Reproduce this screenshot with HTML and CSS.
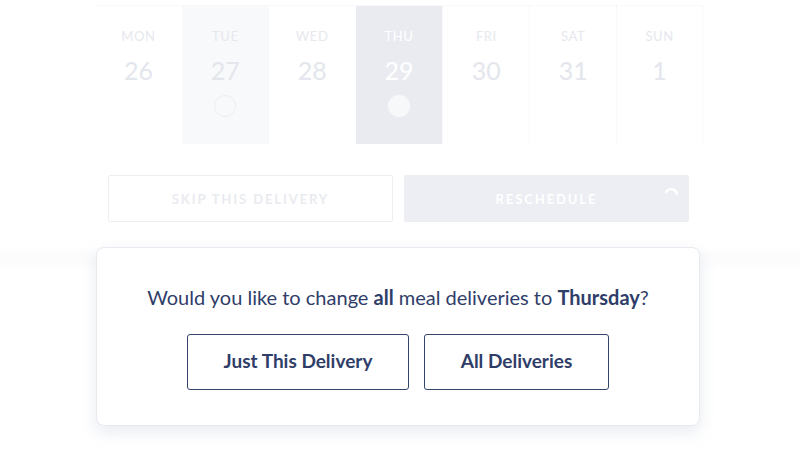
FILE: index.html
```html
<!DOCTYPE html>
<html>
<head>
<meta charset="utf-8">
<link rel="stylesheet" href="styles.css">
</head>
<body>
<div class="page">
  <div class="week">
    <div class="day"><span class="dname">MON</span><span class="dnum">26</span></div>
    <div class="day day-tue"><span class="dname">TUE</span><span class="dnum">27</span><span class="dot dot-outline"></span></div>
    <div class="day"><span class="dname">WED</span><span class="dnum">28</span></div>
    <div class="day day-thu"><span class="dname">THU</span><span class="dnum">29</span><span class="dot dot-fill"></span></div>
    <div class="day day-line"><span class="dname">FRI</span><span class="dnum">30</span></div>
    <div class="day day-line"><span class="dname">SAT</span><span class="dnum">31</span></div>
    <div class="day day-line day-last"><span class="dname">SUN</span><span class="dnum">1</span></div>
  </div>

  <div class="actions">
    <div class="btn-skip">SKIP THIS DELIVERY</div>
    <div class="btn-resched">RESCHEDULE
      <svg class="spinner" width="18" height="18" viewBox="0 0 18 18"><path d="M4 7 A6 6 0 0 1 15 9" fill="none" stroke="#ffffff" stroke-width="2.4" stroke-linecap="round"/></svg>
    </div>
  </div>

  <div class="backdrop">
    <div class="modal">
      <p class="question">Would you like to change <b>all</b> meal deliveries to <b>Thursday</b>?</p>
      <div class="choices">
        <div class="choice choice-just">Just This Delivery</div>
        <div class="choice choice-all">All Deliveries</div>
      </div>
    </div>
  </div>
</div>
</body>
</html>
```
FILE: styles.css
```css
html, body {
  margin: 0;
  padding: 0;
  background: #ffffff;
}
body {
  width: 800px;
  height: 459px;
  overflow: hidden;
  font-family: "Lato", "Open Sans", sans-serif;
}
.page {
  padding-top: 5px;
}
.week {
  margin-left: 95px;
  width: 608px;
  display: grid;
  grid-template-columns: repeat(7, 1fr);
  border-top: 1px dotted #f1f2f5;
  height: 138px;
}
.day {
  display: flex;
  flex-direction: column;
  align-items: center;
  padding-top: 22px;
}
.day-tue {
  background: #f8f9fa;
}
.day-thu {
  background: #e9ebf1;
}
.day-line {
  border-left: 1px dotted #f3f4f7;
}
.day-last {
  border-right: 1px dotted #f3f4f7;
}
.dname {
  font-size: 13px;
  letter-spacing: 0.6px;
  color: #e6e8ee;
  line-height: 16px;
}
.dnum {
  font-size: 25px;
  color: #e4e6ed;
  line-height: 30px;
  margin-top: 11px;
}
.day-thu .dname, .day-thu .dnum {
  color: #ffffff;
}
.dot {
  width: 22px;
  height: 22px;
  border-radius: 50%;
  margin-top: 10px;
  box-sizing: border-box;
}
.dot-outline {
  border: 1.5px solid #eceef2;
}
.dot-fill {
  background: #f7f8fa;
}
.actions {
  display: flex;
  gap: 11px;
  margin-left: 108px;
  margin-top: 31px;
}
.btn-skip, .btn-resched {
  width: 285px;
  height: 47px;
  box-sizing: border-box;
  display: flex;
  align-items: center;
  justify-content: center;
  font-size: 13px;
  font-weight: 700;
  letter-spacing: 1.9px;
  border-radius: 2px;
  position: relative;
}
.btn-skip {
  border: 1px solid #eceef2;
  color: #e9ebf0;
}
.btn-resched {
  background: #eceef3;
  color: #ffffff;
}
.spinner {
  position: absolute;
  right: 9px;
  top: 10px;
}
.backdrop {
  margin-top: 25px;
  background: linear-gradient(to bottom, #ffffff 0, #fcfcfd 6px, #fcfcfd 16px, #ffffff 22px);
}
.modal {
  margin-left: 96px;
  width: 604px;
  height: 179px;
  box-sizing: border-box;
  background: #ffffff;
  border: 1px solid #e8eaf0;
  border-radius: 8px;
  box-shadow: 0 6px 16px rgba(190, 198, 215, 0.35);
  display: flex;
  flex-direction: column;
  align-items: center;
}
.question {
  margin: 37px 0 0;
  font-size: 20px;
  line-height: 24px;
  color: #2f3d69;
}
.question b {
  font-weight: 700;
}
.choices {
  display: flex;
  gap: 15px;
  margin-top: 25px;
}
.choice {
  height: 56px;
  box-sizing: border-box;
  border: 1.5px solid #35436f;
  border-radius: 3px;
  display: flex;
  align-items: center;
  justify-content: center;
  padding-bottom: 3px;
  font-size: 19px;
  font-weight: 700;
  color: #2f3d69;
}
.choice-just {
  width: 222px;
}
.choice-all {
  width: 185px;
}
```
